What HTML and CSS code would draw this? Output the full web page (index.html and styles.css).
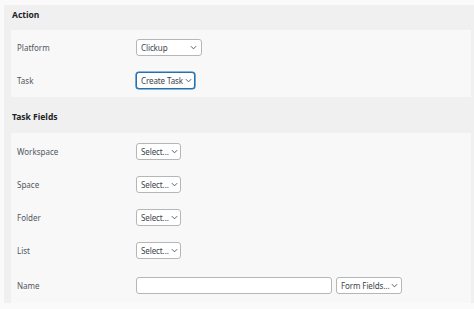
FILE: index.html
```html
<!DOCTYPE html>
<html lang="en">
<head>
  <meta charset="UTF-8">
  <meta name="viewport" content="width=device-width, initial-scale=1.0">
  <title>Clickup Action</title>
  <link rel="stylesheet" href="styles.css">
</head>
<body>
  <div class="box">
    <div class="section-head first">Action</div>
    <div class="panel">
      <div class="row">
        <span class="label">Platform</span>
        <div class="select w-platform"><span>Clickup</span><svg viewBox="0 0 8 5"><path d="M1 1l3 3 3-3"/></svg></div>
      </div>
      <div class="row">
        <span class="label">Task</span>
        <div class="select focus"><span>Create Task</span><svg viewBox="0 0 8 5"><path d="M1 1l3 3 3-3"/></svg></div>
      </div>
    </div>

    <div class="section-head">Task Fields</div>
    <div class="panel">
      <div class="row">
        <span class="label">Workspace</span>
        <div class="select"><span>Select...</span><svg viewBox="0 0 8 5"><path d="M1 1l3 3 3-3"/></svg></div>
      </div>
      <div class="row">
        <span class="label">Space</span>
        <div class="select"><span>Select...</span><svg viewBox="0 0 8 5"><path d="M1 1l3 3 3-3"/></svg></div>
      </div>
      <div class="row">
        <span class="label">Folder</span>
        <div class="select"><span>Select...</span><svg viewBox="0 0 8 5"><path d="M1 1l3 3 3-3"/></svg></div>
      </div>
      <div class="row">
        <span class="label">List</span>
        <div class="select"><span>Select...</span><svg viewBox="0 0 8 5"><path d="M1 1l3 3 3-3"/></svg></div>
      </div>
      <div class="row last">
        <span class="label">Name</span>
        <div class="input"></div>
        <div class="select w-fields"><span>Form Fields...</span><svg viewBox="0 0 8 5"><path d="M1 1l3 3 3-3"/></svg></div>
      </div>
    </div>
  </div>
</body>
</html>
```

FILE: styles.css
```css
body {
  margin: 0;
  background: #fafafa;
  font-family: "Noto Sans", "Open Sans", sans-serif;
  color: #3c434a;
  font-size: 8px;
}
.box {
  margin: 5px 0 6px 4px;
  padding: 0 3px 0 7px;
  background: #f0f0f1;
}
.section-head {
  font-weight: bold;
  font-size: 8.5px;
  color: #1d2327;
  padding: 0 1px;
  height: 25px;
  line-height: 19px;
}
.section-head:not(.first) {
  height: 36px;
  line-height: 40px;
}
.panel {
  background: #f8f8f8;
  padding: 9px 6px 8px;
  display: flex;
  flex-direction: column;
  gap: 16px;
}
.panel + .section-head + .panel {
  padding-top: 10px;
  padding-bottom: 9px;
}
.row {
  display: flex;
  align-items: center;
  height: 17px;
  gap: 4px;
}
.row.last {
  margin-top: 2px;
}
.label {
  width: 115px;
  color: #50575e;
}
.select {
  box-sizing: border-box;
  height: 17px;
  width: 45px;
  border: 1px solid #b4b7ba;
  border-radius: 3px;
  background: #fff;
  display: flex;
  align-items: center;
  justify-content: space-between;
  gap: 2px;
  padding: 0 4px 0 4px;
  color: #3c434a;
  white-space: nowrap;
  overflow: hidden;
}
.select span {
  letter-spacing: -0.1px;
}
.select svg {
  flex: none;
  width: 7px;
  height: 5px;
  fill: none;
  stroke: #50575e;
  stroke-width: 1.1;
}
.w-platform {
  width: 66px;
}
.focus {
  width: 59px;
  border-color: #2271b1;
  box-shadow: 0 0 0 0.6px #2271b1;
}
.w-fields {
  width: 66px;
}
.input {
  box-sizing: border-box;
  width: 196px;
  height: 17px;
  border: 1px solid #b4b7ba;
  border-radius: 3px;
  background: #fff;
}
```
